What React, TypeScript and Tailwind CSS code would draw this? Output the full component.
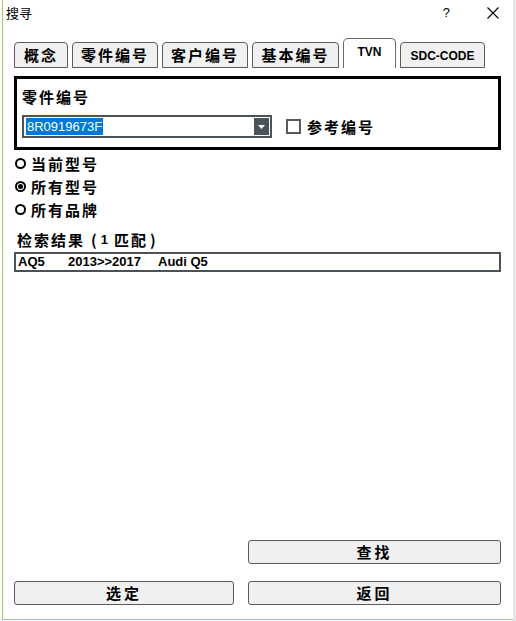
import React from "react";

const cjk = { fontFamily: '"Noto Sans CJK SC", "Liberation Sans", sans-serif' };
const lat = { fontFamily: '"Liberation Sans", "Noto Sans CJK SC", sans-serif' };

function Tab({ label, w, active, latin }: { label: string; w: number; active?: boolean; latin?: boolean }) {
  return (
    <div
      style={{ width: w, ...(latin ? lat : cjk) }}
      className={
        active
          ? "h-[30px] bg-white border border-[#6a6a6a] border-b-0 rounded-t-[5px] flex items-center justify-center pb-[3px] text-[12px] font-bold text-black"
          : "h-[26px] bg-[#f0f0f0] border border-[#5c5c5c] rounded-t-[4px] flex items-center justify-center font-bold text-black " +
            (latin ? "text-[12px] pt-[1px]" : "text-[15px] tracking-[2px]")
      }
    >
      {label}
    </div>
  );
}

function Radio({ checked, label }: { checked?: boolean; label: string }) {
  return (
    <div className="h-[23px] flex items-center">
      <div className="ml-[12px] w-[11px] h-[11px] rounded-full border-[2px] border-black flex items-center justify-center">
        {checked && <div className="w-[5px] h-[5px] rounded-full bg-black" />}
      </div>
      <span style={cjk} className="ml-[5px] text-[15px] font-bold tracking-[2px] text-black leading-[18px]">
        {label}
      </span>
    </div>
  );
}

function Btn({ label, w }: { label: string; w: number }) {
  return (
    <div
      style={{ width: w, ...cjk }}
      className="h-[24px] bg-[#f0f0f0] border border-[#5a5a5a] rounded-[3px] flex items-center justify-center text-[15px] font-bold tracking-[3px] text-black"
    >
      {label}
    </div>
  );
}

export default function App() {
  return (
    <div className="w-[516px] h-[621px] bg-white relative overflow-hidden">
      <div className="absolute right-0 top-0 w-[3px] h-[621px] bg-[#e6e6e6]" />
      <div className="ml-[2px] w-[512px] h-[620px] bg-white border-l border-r border-b border-[#9ccf5c] flex flex-col">
        {/* title bar */}
        <div className="h-[26px] flex items-center">
          <span style={cjk} className="ml-[3px] text-[13px] text-black leading-[16px]">
            搜寻
          </span>
          <div className="flex-1" />
          <span style={lat} className="text-[13px] text-black mr-[37px]">?</span>
          <svg width="12" height="12" viewBox="0 0 12 12" className="mr-[14px]">
            <path d="M0.5 0.5 L11.5 11.5 M11.5 0.5 L0.5 11.5" stroke="#000" strokeWidth="1.1" />
          </svg>
        </div>
        {/* tabs */}
        <div className="mt-[12px] flex items-end gap-[4px] pl-[11px]">
          <Tab label="概念" w={54} />
          <Tab label="零件编号" w={86} />
          <Tab label="客户编号" w={86} />
          <Tab label="基本编号" w={87} />
          <Tab label="TVN" w={53} active latin />
          <Tab label="SDC-CODE" w={85} latin />
        </div>
        {/* group box */}
        <div className="mt-[8px] ml-[11px] w-[487px] h-[74px] border-[3px] border-black pl-[5px]">
          <div style={cjk} className="mt-[9px] text-[15px] font-bold tracking-[2px] leading-[18px] text-black">
            零件编号
          </div>
          <div className="mt-[9px] flex items-center">
            <div className="w-[250px] h-[23px] border-[2px] border-[#4b5258] flex items-center">
              <span style={lat} className="ml-[2px] bg-[#0078d7] text-white text-[13px] leading-[17px] px-[1px]">
                8R0919673F
              </span>
              <div className="flex-1" />
              <div className="w-[17px] h-[19px] bg-[#4b5258] border border-white flex items-center justify-center">
                <svg width="7" height="4" viewBox="0 0 7 4">
                  <path d="M0 0 L7 0 L3.5 4 Z" fill="#fff" />
                </svg>
              </div>
            </div>
            <div className="ml-[14px] w-[15px] h-[15px] border-[2px] border-[#5a5a5a] bg-white" />
            <span style={cjk} className="ml-[6px] text-[15px] font-bold tracking-[2px] text-black leading-[18px]">
              参考编号
            </span>
          </div>
        </div>
        {/* radios */}
        <div className="mt-[2px] flex flex-col">
          <Radio label="当前型号" />
          <Radio label="所有型号" checked />
          <Radio label="所有品牌" />
        </div>
        <div style={cjk} className="mt-[8px] ml-[14px] h-[22px] flex items-center text-[15px] font-bold tracking-[2px] text-black">
          检索结果<span className="ml-[6px]">(</span>
          <span style={lat} className="text-[13px] ml-[2px] mr-[4px]">1</span>匹配<span className="ml-[2px]">)</span>
        </div>
        <div className="mt-[1px] ml-[11px] w-[487px] h-[20px] border-[2px] border-[#4b5258] flex items-center">
          <span style={lat} className="ml-[2px] text-[13px] font-bold text-black w-[50px]">AQ5</span>
          <span style={lat} className="text-[13px] font-bold text-black w-[90px]">2013&gt;&gt;2017</span>
          <span style={lat} className="text-[13px] font-bold text-black">Audi Q5</span>
        </div>
        <div className="flex-1" />
        <div className="flex justify-end pr-[12px]">
          <Btn label="查找" w={253} />
        </div>
        <div className="mt-[17px] mb-[14px] pl-[11px] pr-[12px] flex justify-between">
          <Btn label="选定" w={220} />
          <Btn label="返回" w={253} />
        </div>
      </div>
    </div>
  );
}
